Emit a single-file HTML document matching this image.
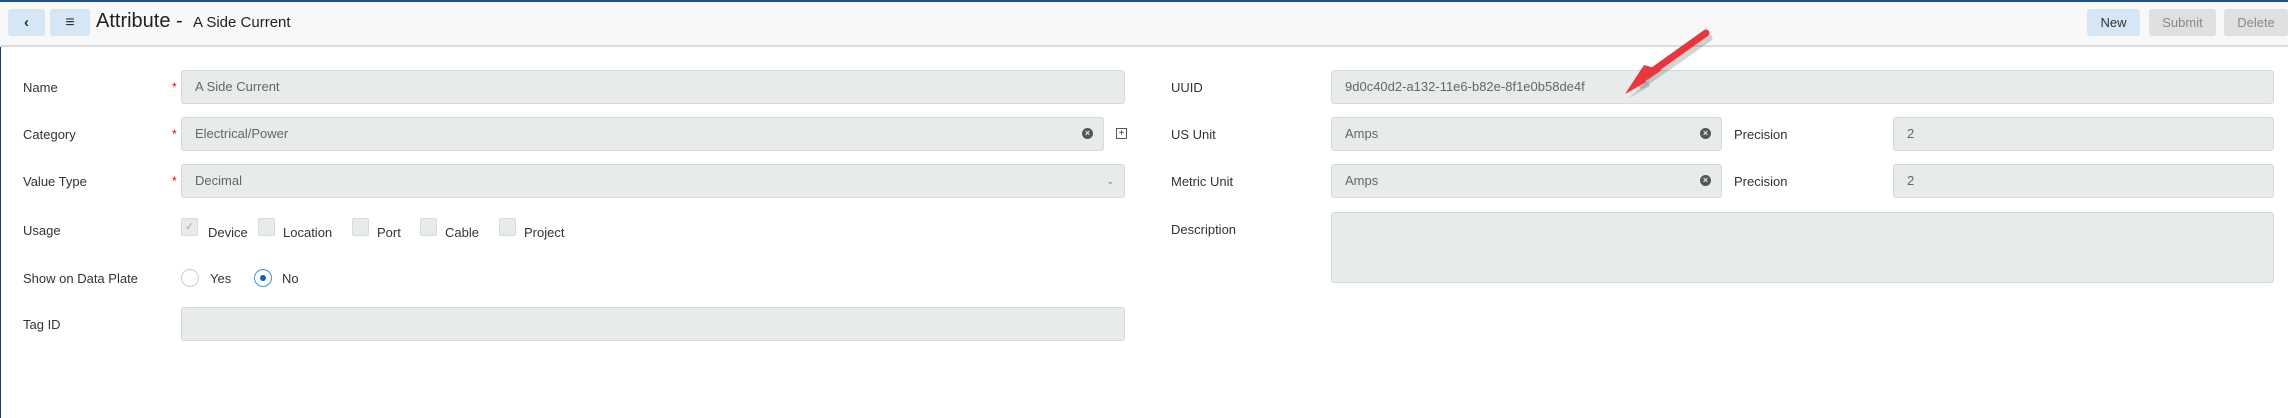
<!DOCTYPE html>
<html><head><meta charset="utf-8"><style>
*{box-sizing:border-box;margin:0;padding:0}
body{width:2288px;height:418px;position:relative;background:#fff;font-family:"Liberation Sans",sans-serif;overflow:hidden;color:#333}
.abs{position:absolute}
.hdr{left:0;top:0;width:2288px;height:47px;background:#f8f8f8;border-top:2px solid #1b4f93;border-bottom:2px solid #ddd}
.btn{position:absolute;top:9px;height:27px;border-radius:3px;font-size:13px;text-align:center;line-height:27px}
.lbl{position:absolute;font-size:13px;color:#333;line-height:16px}
.inp{position:absolute;background:#e8ebeb;border:1px solid #d6d9d9;border-radius:3px;height:34px;font-size:13px;color:#666;padding-left:13px;line-height:32px}
.star{position:absolute;color:#e00;font-size:12px;left:172px}
.cb{position:absolute;width:17px;height:18px;background:#e8ebeb;border:1px solid #d9dcdc;border-radius:2px}
.rd{position:absolute;width:18px;height:18px;border-radius:50%;border:1px solid #ccc;background:#fff}
.x{position:absolute;width:11px;height:11px;border-radius:50%;background:#555;color:#e8ebeb;font-size:9px;line-height:11px;text-align:center;font-weight:bold}
</style></head><body>
<div class="abs hdr"></div>
<div class="abs" style="left:0;top:47px;width:1px;height:371px;background:#1b3a66"></div>
<div class="btn" style="left:8px;width:37px;background:#d5e6f5;font-weight:bold;font-size:15px">&#8249;</div>
<div class="btn" style="left:50px;width:40px;background:#d5e6f5;font-size:16px">&#8801;</div>
<div class="abs" style="left:96px;top:10px;font-size:20px;color:#222">Attribute -</div>
<div class="abs" style="left:193px;top:14px;font-size:15px;color:#222">A Side Current</div>
<div class="btn" style="left:2087px;width:53px;background:#d5e6f5;color:#333">New</div>
<div class="btn" style="left:2149px;width:67px;background:#e0e0e0;color:#888">Submit</div>
<div class="btn" style="left:2224px;width:64px;background:#e0e0e0;color:#888">Delete</div>

<div class="lbl" style="left:23px;top:80px">Name</div><div class="star" style="top:80px">*</div>
<div class="inp" style="left:181px;top:70px;width:944px">A Side Current</div>
<div class="lbl" style="left:23px;top:127px">Category</div><div class="star" style="top:127px">*</div>
<div class="inp" style="left:181px;top:117px;width:923px">Electrical/Power</div>
<div class="x" style="left:1082px;top:128px">×</div>
<div class="abs" style="left:1116px;top:128px;width:11px;height:11px;border:1px solid #555;font-size:10px;line-height:9px;text-align:center">+</div>
<div class="lbl" style="left:23px;top:174px">Value Type</div><div class="star" style="top:174px">*</div>
<div class="inp" style="left:181px;top:164px;width:944px">Decimal<span style="position:absolute;right:10px;font-size:9px;color:#777">&#8964;</span></div>

<div class="lbl" style="left:23px;top:223px">Usage</div>
<div class="cb" style="left:181px;top:218px;color:#aaa;font-size:11px;text-align:center;line-height:16px">&#10003;</div>
<div class="lbl" style="left:208px;top:225px">Device</div>
<div class="cb" style="left:258px;top:218px"></div><div class="lbl" style="left:283px;top:225px">Location</div>
<div class="cb" style="left:352px;top:218px"></div><div class="lbl" style="left:377px;top:225px">Port</div>
<div class="cb" style="left:420px;top:218px"></div><div class="lbl" style="left:445px;top:225px">Cable</div>
<div class="cb" style="left:499px;top:218px"></div><div class="lbl" style="left:524px;top:225px">Project</div>

<div class="lbl" style="left:23px;top:271px">Show on Data Plate</div>
<div class="rd" style="left:181px;top:269px"></div><div class="lbl" style="left:210px;top:271px">Yes</div>
<div class="rd" style="left:254px;top:269px;border-color:#4a90d9"><div style="position:absolute;left:5px;top:5px;width:6px;height:6px;border-radius:50%;background:#1a5fb4"></div></div>
<div class="lbl" style="left:282px;top:271px">No</div>

<div class="lbl" style="left:23px;top:317px">Tag ID</div>
<div class="inp" style="left:181px;top:307px;width:944px"></div>

<div class="lbl" style="left:1171px;top:80px">UUID</div>
<div class="inp" style="left:1331px;top:70px;width:943px">9d0c40d2-a132-11e6-b82e-8f1e0b58de4f</div>
<div class="lbl" style="left:1171px;top:127px">US Unit</div>
<div class="inp" style="left:1331px;top:117px;width:391px">Amps</div>
<div class="x" style="left:1700px;top:128px">×</div>
<div class="lbl" style="left:1734px;top:127px">Precision</div>
<div class="inp" style="left:1893px;top:117px;width:381px">2</div>
<div class="lbl" style="left:1171px;top:174px">Metric Unit</div>
<div class="inp" style="left:1331px;top:164px;width:391px">Amps</div>
<div class="x" style="left:1700px;top:175px">×</div>
<div class="lbl" style="left:1734px;top:174px">Precision</div>
<div class="inp" style="left:1893px;top:164px;width:381px">2</div>
<div class="lbl" style="left:1171px;top:222px">Description</div>
<div class="inp" style="left:1331px;top:212px;width:943px;height:71px"></div>

<svg class="abs" style="left:1600px;top:25px" width="130" height="90" viewBox="0 0 130 90">
<line x1="107" y1="10" x2="40" y2="57" stroke="#555" stroke-opacity=".25" stroke-width="7" stroke-linecap="round" transform="translate(2,3)"/>
<line x1="106" y1="8" x2="40" y2="55" stroke="#e8383d" stroke-width="7" stroke-linecap="round"/>
<polygon points="27,70 58,42 40,40 48,58" fill="#555" fill-opacity=".25" transform="translate(2,3)"/>
<polygon points="25,69 62,45 44,40 46,57" fill="#e8383d"/>
<polygon points="25,69 46,57 44,40" fill="#e8383d"/>
</svg>
</body></html>
